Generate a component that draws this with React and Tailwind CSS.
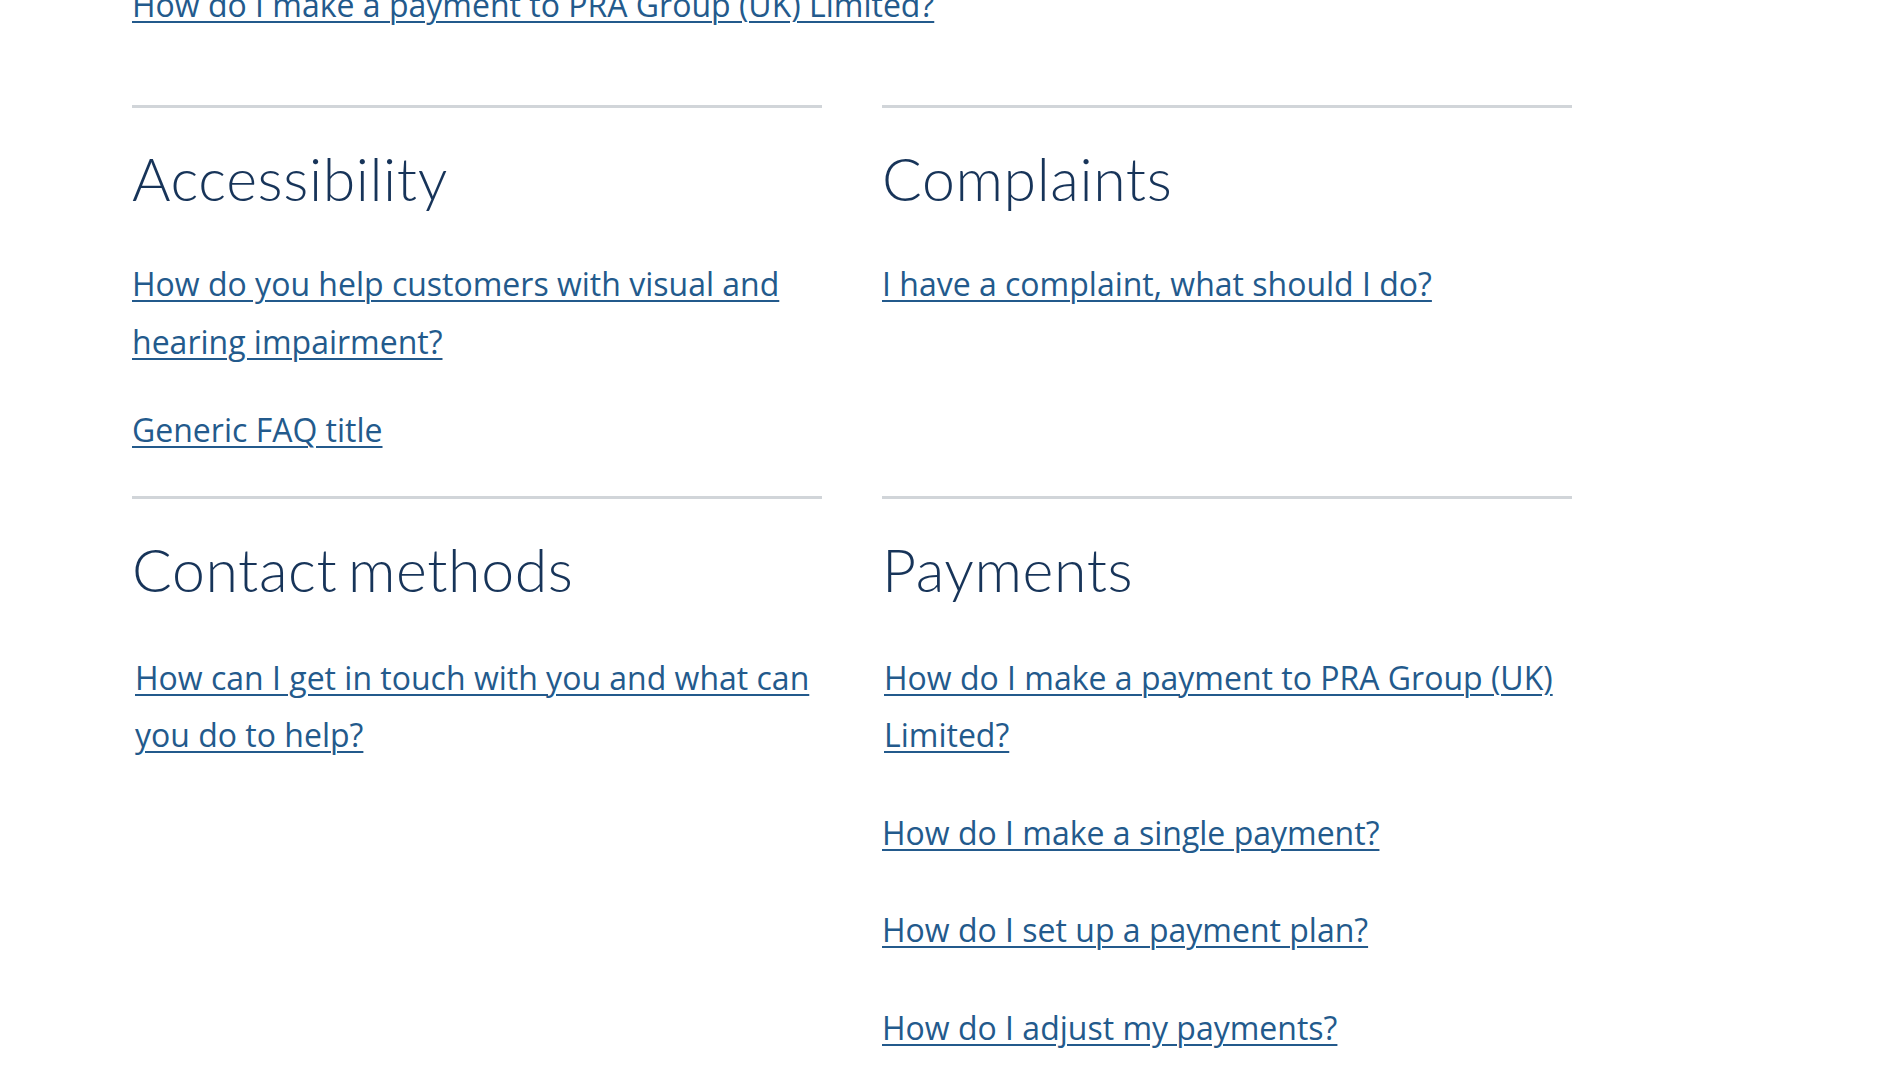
import React from "react";

const linkCls =
  "block text-[32px] leading-[57.6px] text-[#235a8c] underline decoration-[2px] underline-offset-[4px] [font-family:'Open_Sans',sans-serif]";

function Section({ title, children }) {
  return (
    <div className="border-t-[3px] border-[#d1d5d9] pb-[37px]">
      <h2 className="mt-[36px] text-[59px] leading-[69.6px] font-light tracking-[0.6px] [word-spacing:-6px] text-[#173459] [font-family:Lato,sans-serif]">
        {title}
      </h2>
      <div className="mt-[42px] flex flex-col">{children}</div>
    </div>
  );
}

export default function App() {
  return (
    <div className="min-h-[1082px] bg-white overflow-hidden">
      <div className="ml-[132px] w-[1440px]">
        <a href="#" className={linkCls + " -mt-[24px]"}>
          How do I make a payment to PRA Group (UK) Limited?
        </a>
        <div className="mt-[71px] grid grid-cols-[690px_690px] gap-x-[60px]">
          <Section title="Accessibility">
            <a href="#" className={linkCls}>
              How do you help customers with visual and hearing impairment?
            </a>
            <a href="#" className={linkCls + " mt-[31px] self-start"}>
              Generic FAQ title
            </a>
          </Section>
          <Section title="Complaints">
            <a href="#" className={linkCls + " self-start"}>
              I have a complaint, what should I do?
            </a>
          </Section>
          <Section title="Contact methods">
            <a href="#" className={linkCls + " ml-[3px] mt-[2px]"}>
              How can I get in touch with you and what can you do to help?
            </a>
          </Section>
          <Section title="Payments">
            <a href="#" className={linkCls + " ml-[2px] mt-[2px]"}>
              How do I make a payment to PRA Group (UK) Limited?
            </a>
            <a href="#" className={linkCls + " mt-[40px] self-start"}>
              How do I make a single payment?
            </a>
            <a href="#" className={linkCls + " mt-[40px] self-start"}>
              How do I set up a payment plan?
            </a>
            <a href="#" className={linkCls + " mt-[40px] self-start"}>
              How do I adjust my payments?
            </a>
          </Section>
        </div>
      </div>
    </div>
  );
}
